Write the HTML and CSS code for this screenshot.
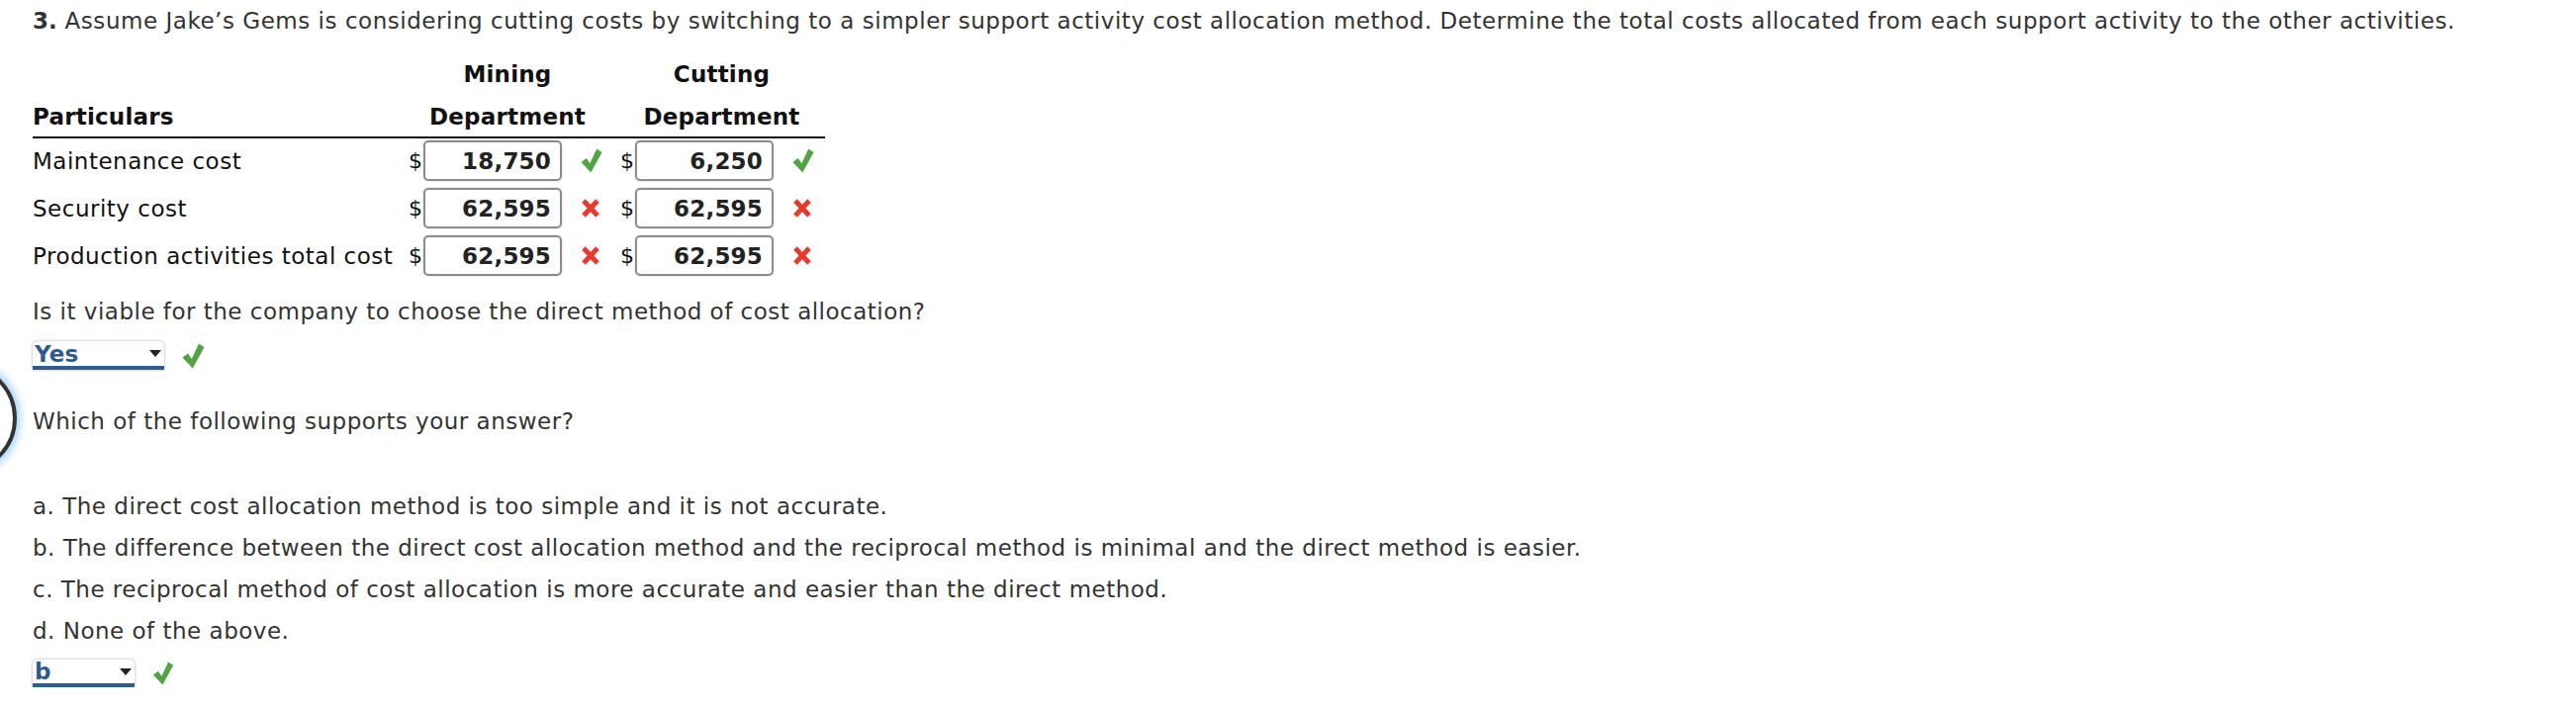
FILE: index.html
```html
<!DOCTYPE html>
<html>
<head>
<meta charset="utf-8">
<link rel="stylesheet" href="styles.css">
</head>
<body>
<div class="page">
  <p class="title"><b>3.</b> Assume Jake’s Gems is considering cutting costs by switching to a simpler support activity cost allocation method. Determine the total costs allocated from each support activity to the other activities.</p>

  <div class="grid">
    <div class="h1 c-mine">Mining</div>
    <div class="h1 c-cut">Cutting</div>
    <div class="h2 c-lab">Particulars</div>
    <div class="h2 c-mine">Department</div>
    <div class="h2 c-cut">Department</div>
    <div class="rule"></div>

    <div class="lab">Maintenance cost</div>
    <div class="dol">$</div><div class="box">18,750</div><div class="mk"><svg class="ok" viewBox="0 0 23 26"><path d="M0.5 14.5 L6 10.5 L9.8 16 L17 0.5 L22.5 4 L10.8 25.5 Z"/></svg></div>
    <div class="dol">$</div><div class="box">6,250</div><div class="mk"><svg class="ok" viewBox="0 0 23 26"><path d="M0.5 14.5 L6 10.5 L9.8 16 L17 0.5 L22.5 4 L10.8 25.5 Z"/></svg></div>

    <div class="lab">Security cost</div>
    <div class="dol">$</div><div class="box">62,595</div><div class="mk"><svg class="no" viewBox="0 0 20 19"><path d="M3 2 L17 17 M17 2 L3 17"/></svg></div>
    <div class="dol">$</div><div class="box">62,595</div><div class="mk"><svg class="no" viewBox="0 0 20 19"><path d="M3 2 L17 17 M17 2 L3 17"/></svg></div>

    <div class="lab">Production activities total cost</div>
    <div class="dol">$</div><div class="box">62,595</div><div class="mk"><svg class="no" viewBox="0 0 20 19"><path d="M3 2 L17 17 M17 2 L3 17"/></svg></div>
    <div class="dol">$</div><div class="box">62,595</div><div class="mk"><svg class="no" viewBox="0 0 20 19"><path d="M3 2 L17 17 M17 2 L3 17"/></svg></div>
  </div>

  <p class="q1">Is it viable for the company to choose the direct method of cost allocation?</p>
  <div class="ans">
    <div class="sel sel-yes"><span>Yes</span><i class="arr"></i></div>
    <svg class="ok big" viewBox="0 0 23 26"><path d="M0.5 14.5 L6 10.5 L9.8 16 L17 0.5 L22.5 4 L10.8 25.5 Z"/></svg>
  </div>

  <p class="q2">Which of the following supports your answer?</p>

  <ul class="opts">
    <li>a. The direct cost allocation method is too simple and it is not accurate.</li>
    <li>b. The difference between the direct cost allocation method and the reciprocal method is minimal and the direct method is easier.</li>
    <li>c. The reciprocal method of cost allocation is more accurate and easier than the direct method.</li>
    <li>d. None of the above.</li>
  </ul>
  <div class="ans ans2">
    <div class="sel sel-b"><span>b</span><i class="arr"></i></div>
    <svg class="ok big" viewBox="0 0 23 26"><path d="M0.5 14.5 L6 10.5 L9.8 16 L17 0.5 L22.5 4 L10.8 25.5 Z"/></svg>
  </div>
</div>
<div class="ring"></div>
</body>
</html>
```

FILE: styles.css
```css
html, body { margin: 0; padding: 0; background: #fff; }
body { font-family: "DejaVu Sans", Verdana, sans-serif; color: #333; font-size: 23px; letter-spacing: 0.5px; }
.page { padding: 7px 0 0 33px; }
p { margin: 0; }
.title { line-height: 28px; letter-spacing: 0.53px; }
.title b { color: #333; letter-spacing: 0; }

.grid {
  display: grid;
  grid-template-columns: 377px 18px 140px 57px 17px 140px 52px;
  margin-top: 20px;
  color: #111;
  width: 801px;
}
.h1, .h2 { font-weight: bold; color: #111; letter-spacing: 0.2px; }
.h1 { height: 46px; line-height: 41px; text-align: center; }
.h2 { height: 37px; line-height: 34px; text-align: center; }
.h1.c-mine { grid-column: 2 / 5; grid-row: 1; padding-right: 9px; }
.h1.c-cut { grid-column: 5 / 8; grid-row: 1; }
.h2.c-lab { grid-column: 1 / 2; grid-row: 2; text-align: left; }
.h2.c-mine { grid-column: 2 / 5; grid-row: 2; padding-right: 9px; }
.h2.c-cut { grid-column: 5 / 8; grid-row: 2; }
.rule { grid-column: 1 / 8; height: 2px; background: #111; margin-bottom: 2px; }

.lab, .dol, .box, .mk { height: 41px; margin-bottom: 7px; display: flex; align-items: center; }
.lab { color: #111; }
.dol { justify-content: flex-end; padding-right: 1px; color: #111; font-size: 22px; letter-spacing: 0; }
.box {
  box-sizing: border-box;
  border: 2px solid #8c8c8c;
  border-radius: 5px;
  box-shadow: 0 0 2px rgba(0,0,0,0.25);
  justify-content: flex-end;
  padding-right: 9px;
  font-weight: bold;
  color: #222;
  letter-spacing: 0.2px;
}
.mk { padding-left: 19px; }
.ok { width: 22px; height: 25px; fill: #52a342; }
.no { width: 20px; height: 19px; fill: none; stroke: #e8392e; stroke-width: 5; }

.q1 { margin-top: 14px; line-height: 30px; }
.ans { display: flex; align-items: center; margin-top: 15px; }
.sel {
  position: relative;
  box-sizing: border-box;
  background: #fff;
  border-radius: 5px 5px 0 0;
  box-shadow: 0 0 3px rgba(0,0,0,0.35);
  border-bottom: 4px solid #2f5e8e;
  height: 29px;
  display: flex;
  align-items: center;
  font-weight: bold;
  color: #2c5a91;
  padding-left: 2px;
  letter-spacing: 0.2px;
}
.sel span { line-height: 24px; }
.sel-yes { width: 133px; }
.sel-b { width: 103px; height: 28px; }
.arr {
  position: absolute;
  right: 3px;
  top: 9px;
  width: 0; height: 0;
  border-left: 6px solid transparent;
  border-right: 6px solid transparent;
  border-top: 7px solid #222;
}
.big { margin-left: 18px; width: 23px; height: 26px; }
.ans2 { margin-top: 8px; }
.ans2 .big { margin-left: 18px; width: 22px; height: 24px; }

.q2 { margin-top: 37px; line-height: 30px; }
.opts { list-style: none; margin: 50px 0 0 0; padding: 0; }
.opts li { line-height: 42px; height: 42px; }

.ring {
  position: absolute;
  left: -95px;
  top: 367px;
  width: 104px;
  height: 104px;
  border: 4px solid #333;
  border-radius: 50%;
  box-shadow: 0 0 9px 3px rgba(120,190,255,0.75);
}
```
